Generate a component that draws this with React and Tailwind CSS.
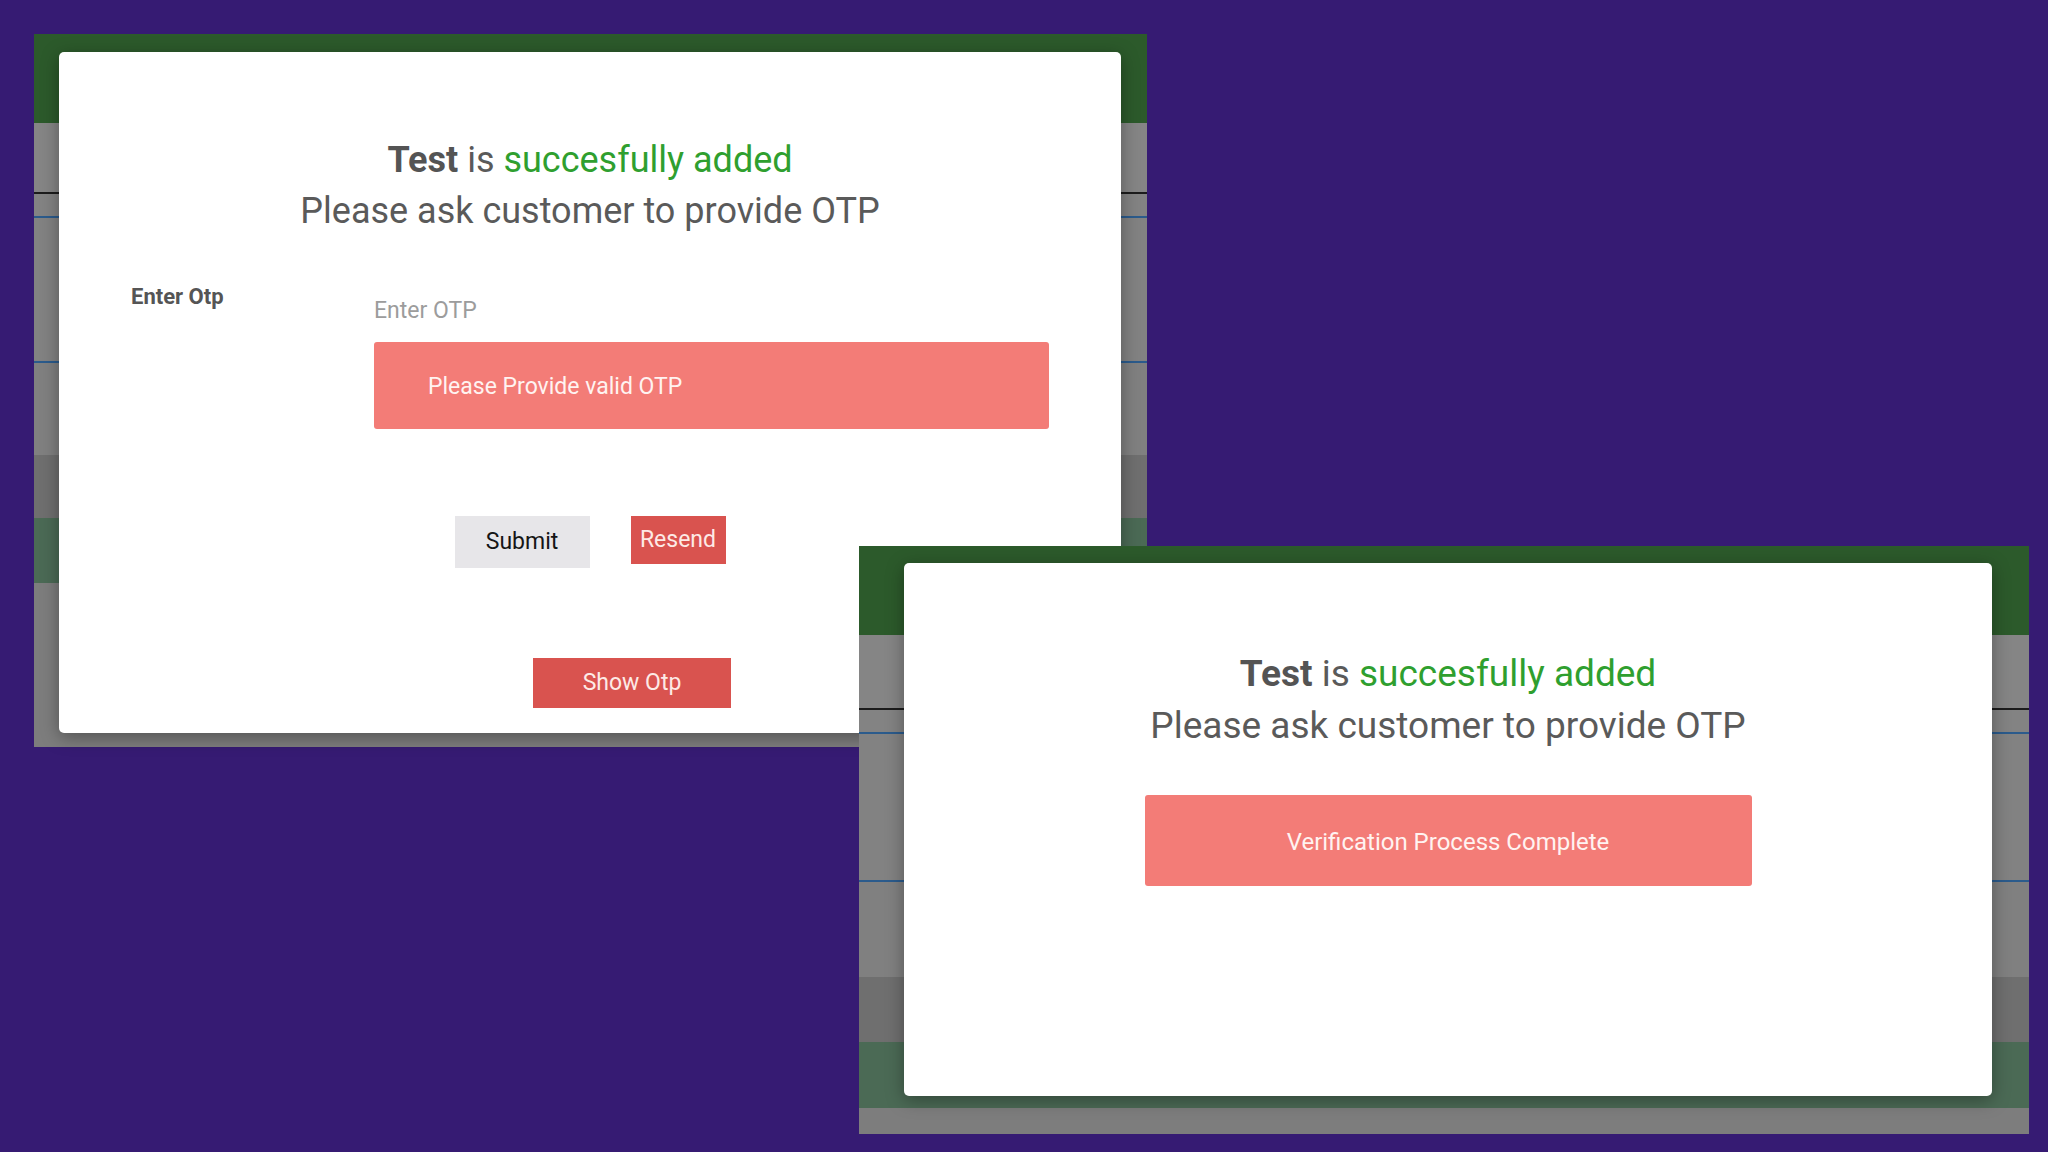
import React from "react";

// backdrop of the greyed-out app page behind each dialog
const PageBackdrop = ({ rows }) => (
  <div className="flex flex-col h-full">
    {rows.map((row, i) => (
      <div key={i} className={row} />
    ))}
  </div>
);

const rowsFirst = [
  "h-[89px] shrink-0 bg-[#2c5a2b]",
  "h-[69px] shrink-0 bg-[#858585]",
  "h-[2px] shrink-0 bg-[#1c1c1c]",
  "h-[22px] shrink-0 bg-[#838383]",
  "h-[2px] shrink-0 bg-[#2b5b8c]",
  "h-[143px] shrink-0 bg-[#828282]",
  "h-[2px] shrink-0 bg-[#2b5b8c]",
  "h-[92px] shrink-0 bg-[#808080]",
  "h-[63px] shrink-0 bg-[#6f6f6f]",
  "h-[65px] shrink-0 bg-[#4b6a55]",
  "flex-1 bg-[#7d7d7d]",
];

const rowsSecond = [
  "h-[89px] shrink-0 bg-[#2c5a2b]",
  "h-[73px] shrink-0 bg-[#858585]",
  "h-[2px] shrink-0 bg-[#1c1c1c]",
  "h-[22px] shrink-0 bg-[#838383]",
  "h-[2px] shrink-0 bg-[#2b5b8c]",
  "h-[146px] shrink-0 bg-[#828282]",
  "h-[2px] shrink-0 bg-[#2b5b8c]",
  "h-[95px] shrink-0 bg-[#808080]",
  "h-[65px] shrink-0 bg-[#6f6f6f]",
  "h-[66px] shrink-0 bg-[#4b6a55]",
  "flex-1 bg-[#7d7d7d]",
];

const Heading = ({ size }) => (
  <div className={`text-center text-[#5a5a5a] ${size}`}>
    <p>
      <span className="font-bold text-[#545454]">Test</span> is{" "}
      <span className="text-[#2f9f2f]">succesfully added</span>
    </p>
    <p>Please ask customer to provide OTP</p>
  </div>
);

const OtpDialog = () => (
  <div className="absolute left-[34px] top-[34px] w-[1113px] h-[713px]">
    <PageBackdrop rows={rowsFirst} />
    <div className="absolute left-[25px] top-[18px] w-[1062px] h-[681px] bg-white rounded-[5px] shadow-[0_4px_18px_rgba(0,0,0,0.35)] flex flex-col pt-[83px]">
      <Heading size="text-[36px] leading-[51px]" />

      <div className="flex px-[72px] mt-[45px]">
        <label className="w-[243px] shrink-0 text-[22px] leading-[30px] font-bold text-[#555555]">
          Enter Otp
        </label>
        <div className="flex-1 flex flex-col">
          <input
            placeholder="Enter OTP"
            className="h-[56px] text-[23px] text-[#333] placeholder:text-[#9c9c9c] outline-none bg-transparent"
          />
          <div className="mt-[4px] h-[87px] bg-[#f37c77] rounded-[3px] flex items-center pl-[54px] pt-[3px] text-[23px] text-[#fff3f1]">
            Please Provide valid OTP
          </div>
        </div>
      </div>

      <div className="flex justify-center items-start gap-[41px] mt-[87px]">
        <button className="w-[135px] h-[52px] bg-[#e7e6e9] text-[23px] text-[#151515]">
          Submit
        </button>
        <button className="w-[95px] h-[48px] bg-[#d9534f] text-[23px] text-[#fdeae6]">
          Resend
        </button>
      </div>

      <div className="flex justify-center pl-[84px] mt-[90px]">
        <button className="w-[198px] h-[50px] bg-[#d9534f] text-[23px] text-[#fdeae6]">
          Show Otp
        </button>
      </div>
    </div>
  </div>
);

const DoneDialog = () => (
  <div className="absolute left-[859px] top-[546px] w-[1170px] h-[588px]">
    <PageBackdrop rows={rowsSecond} />
    <div className="absolute left-[45px] top-[17px] w-[1088px] h-[533px] bg-white rounded-[5px] shadow-[0_4px_18px_rgba(0,0,0,0.35)] flex flex-col items-center pt-[85px]">
      <Heading size="text-[37px] leading-[52px]" />
      <div className="mt-[43px] w-[607px] h-[91px] bg-[#f37c77] rounded-[3px] flex items-center justify-center pt-[2px] text-[24px] text-[#fff3f1]">
        Verification Process Complete
      </div>
    </div>
  </div>
);

export default function App() {
  return (
    <div className="relative w-[2048px] h-[1152px] overflow-hidden bg-[#361b73] font-[Roboto,sans-serif]">
      <OtpDialog />
      <DoneDialog />
    </div>
  );
}
